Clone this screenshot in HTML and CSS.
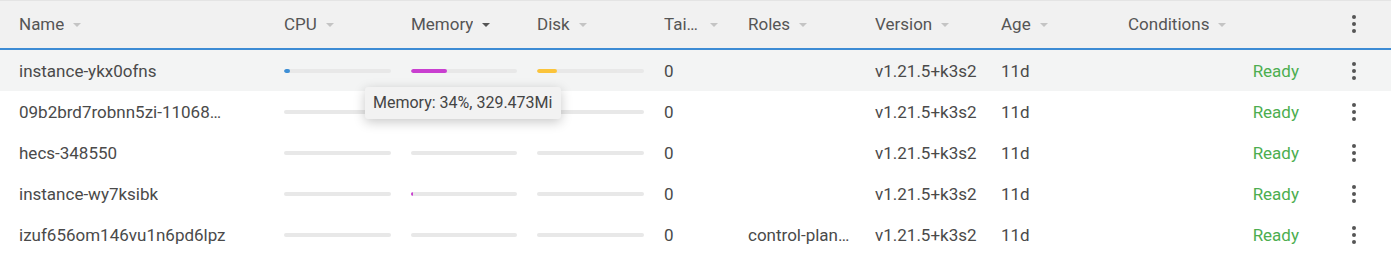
FILE: index.html
```html
<!DOCTYPE html>
<html lang="en">
<head>
  <meta charset="UTF-8"/>
  <title>Nodes</title>
  <link rel="stylesheet" href="styles.css">
</head>
<body>

  <div class="table">
    <!-- header -->
    <div class="row head">
      <div class="cell name"><span class="label">Name</span><i class="sort"></i></div>
      <div class="cell bar-col"><span class="label">CPU</span><i class="sort"></i></div>
      <div class="cell bar-col mem-col"><span class="label">Memory</span><i class="sort active"></i></div>
      <div class="cell bar-col"><span class="label">Disk</span><i class="sort"></i></div>
      <div class="cell taints"><span class="label">Taints</span><i class="sort"></i></div>
      <div class="cell roles"><span class="label">Roles</span><i class="sort"></i></div>
      <div class="cell version"><span class="label">Version</span><i class="sort"></i></div>
      <div class="cell age"><span class="label">Age</span><i class="sort"></i></div>
      <div class="cell conditions"><span class="label">Conditions</span><i class="sort"></i></div>
      <div class="cell menu"><svg width="4" height="18" viewBox="0 0 4 18"><circle cx="2" cy="2" r="2"/><circle cx="2" cy="9" r="2"/><circle cx="2" cy="16" r="2"/></svg></div>
    </div>

    <div class="row hover">
      <div class="cell name"><span class="label">instance-ykx0ofns</span></div>
      <div class="cell bar-col"><div class="bar"><div class="fill cpu" style="width:6%"></div></div></div>
      <div class="cell bar-col"><div class="bar"><div class="fill mem" style="width:34%"></div></div></div>
      <div class="cell bar-col"><div class="bar"><div class="fill disk" style="width:19%"></div></div></div>
      <div class="cell taints">0</div>
      <div class="cell roles"></div>
      <div class="cell version">v1.21.5+k3s2</div>
      <div class="cell age">11d</div>
      <div class="cell conditions ready">Ready</div>
      <div class="cell menu"><svg width="4" height="18" viewBox="0 0 4 18"><circle cx="2" cy="2" r="2"/><circle cx="2" cy="9" r="2"/><circle cx="2" cy="16" r="2"/></svg></div>
    </div>

    <div class="row">
      <div class="cell name"><span class="label">09b2brd7robnn5zi-1106853a2c</span></div>
      <div class="cell bar-col"><div class="bar"></div></div>
      <div class="cell bar-col"><div class="bar"></div></div>
      <div class="cell bar-col"><div class="bar"></div></div>
      <div class="cell taints">0</div>
      <div class="cell roles"></div>
      <div class="cell version">v1.21.5+k3s2</div>
      <div class="cell age">11d</div>
      <div class="cell conditions ready">Ready</div>
      <div class="cell menu"><svg width="4" height="18" viewBox="0 0 4 18"><circle cx="2" cy="2" r="2"/><circle cx="2" cy="9" r="2"/><circle cx="2" cy="16" r="2"/></svg></div>
    </div>

    <div class="row">
      <div class="cell name"><span class="label">hecs-348550</span></div>
      <div class="cell bar-col"><div class="bar"></div></div>
      <div class="cell bar-col"><div class="bar"></div></div>
      <div class="cell bar-col"><div class="bar"></div></div>
      <div class="cell taints">0</div>
      <div class="cell roles"></div>
      <div class="cell version">v1.21.5+k3s2</div>
      <div class="cell age">11d</div>
      <div class="cell conditions ready">Ready</div>
      <div class="cell menu"><svg width="4" height="18" viewBox="0 0 4 18"><circle cx="2" cy="2" r="2"/><circle cx="2" cy="9" r="2"/><circle cx="2" cy="16" r="2"/></svg></div>
    </div>

    <div class="row">
      <div class="cell name"><span class="label">instance-wy7ksibk</span></div>
      <div class="cell bar-col"><div class="bar"></div></div>
      <div class="cell bar-col"><div class="bar"><div class="fill mem" style="width:2px"></div></div></div>
      <div class="cell bar-col"><div class="bar"></div></div>
      <div class="cell taints">0</div>
      <div class="cell roles"></div>
      <div class="cell version">v1.21.5+k3s2</div>
      <div class="cell age">11d</div>
      <div class="cell conditions ready">Ready</div>
      <div class="cell menu"><svg width="4" height="18" viewBox="0 0 4 18"><circle cx="2" cy="2" r="2"/><circle cx="2" cy="9" r="2"/><circle cx="2" cy="16" r="2"/></svg></div>
    </div>

    <div class="row">
      <div class="cell name"><span class="label">izuf656om146vu1n6pd6lpz</span></div>
      <div class="cell bar-col"><div class="bar"></div></div>
      <div class="cell bar-col"><div class="bar"></div></div>
      <div class="cell bar-col"><div class="bar"></div></div>
      <div class="cell taints">0</div>
      <div class="cell roles"><span class="label">control-plane,master</span></div>
      <div class="cell version">v1.21.5+k3s2</div>
      <div class="cell age">11d</div>
      <div class="cell conditions ready">Ready</div>
      <div class="cell menu"><svg width="4" height="18" viewBox="0 0 4 18"><circle cx="2" cy="2" r="2"/><circle cx="2" cy="9" r="2"/><circle cx="2" cy="16" r="2"/></svg></div>
    </div>

    <!-- tooltip for hovered memory bar -->
    <div class="tooltip">Memory: 34%, 329.473Mi</div>
  </div>

</body>
</html>
```
FILE: styles.css
```css
* { box-sizing: border-box; margin: 0; padding: 0; }
body, html { height: 100%; font-family: Roboto, 'Noto Sans', sans-serif; background: #fff; overflow: hidden; }

.table {
  position: relative;
  border-top: 1px solid #e4e4e4;
  color: #4a4a4a;
  font-size: 17px;
}

.row {
  display: grid;
  grid-template-columns: 284px 127px 126px 127px 84px 127px 126px 127px 192px 71px;
  height: 41px;
  align-items: center;
}

.row.head {
  height: 49px;
  padding-bottom: 1px;
  background: #f1f1f1;
  border-bottom: 2px solid #3d8bd4;
  color: #555;
}

.row.hover {
  background: #f3f4f4;
}

.cell {
  display: flex;
  align-items: center;
  min-width: 0;
  padding-right: 20px;
  white-space: nowrap;
}

.cell.name { padding-left: 19px; padding-right: 56px; }

.label {
  overflow: hidden;
  text-overflow: ellipsis;
  min-width: 0;
}

.sort {
  flex: none;
  width: 0;
  height: 0;
  margin-left: 9px;
  margin-top: 1px;
  border-left: 4px solid transparent;
  border-right: 4px solid transparent;
  border-top: 4px solid #c4c4c4;
}

.sort.active { border-top-color: #555; }

.row.head .cell.taints { padding-right: 30px; }

.bar {
  width: 100%;
  height: 4px;
  border-radius: 2px;
  background: #e8e8e8;
  overflow: hidden;
}

.fill { height: 100%; border-radius: 2px; }
.fill.cpu { background: #3d8fd6; }
.fill.mem { background: #c93fd0; }
.fill.disk { background: #fbc43b; }

.cell.conditions { justify-content: flex-end; padding-right: 21px; }
.cell.conditions.ready { color: #4cae50; }
.row.head .cell.conditions { justify-content: flex-start; }

.cell.menu { justify-content: center; padding-right: 0; padding-left: 0; margin-left: -4px; }
.cell.menu svg { fill: #555; }

.tooltip {
  position: absolute;
  left: 365px;
  top: 86px;
  padding: 6px 9px 7px 8px;
  background: #f2f2f2;
  border-radius: 3px;
  box-shadow: 0 3px 12px rgba(0, 0, 0, 0.22);
  font-size: 16px;
  color: #444;
  white-space: nowrap;
}
```
